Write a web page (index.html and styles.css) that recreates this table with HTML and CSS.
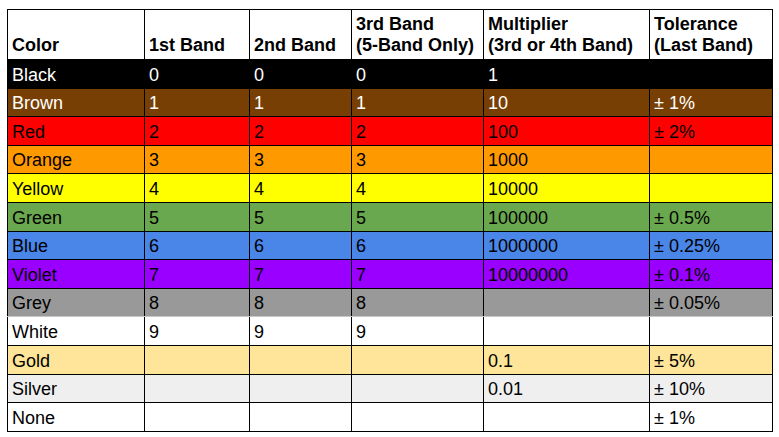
FILE: index.html
```html
<!DOCTYPE html>
<html>
<head>
<meta charset="utf-8">
<link rel="stylesheet" href="styles.css">
</head>
<body>
<div class="wrap">
<table class="bands">
  <colgroup>
    <col class="c1"><col class="c2"><col class="c3"><col class="c4"><col class="c5"><col class="c6">
  </colgroup>
  <thead>
    <tr class="head">
      <th>Color</th>
      <th>1st Band</th>
      <th>2nd Band</th>
      <th>3rd Band<br>(5-Band Only)</th>
      <th>Multiplier<br>(3rd or 4th Band)</th>
      <th>Tolerance<br>(Last Band)</th>
    </tr>
  </thead>
  <tbody>
    <tr class="black"><td>Black</td><td>0</td><td>0</td><td>0</td><td>1</td><td></td></tr>
    <tr class="brown"><td>Brown</td><td>1</td><td>1</td><td>1</td><td>10</td><td>± 1%</td></tr>
    <tr class="red"><td>Red</td><td>2</td><td>2</td><td>2</td><td>100</td><td>± 2%</td></tr>
    <tr class="orange"><td>Orange</td><td>3</td><td>3</td><td>3</td><td>1000</td><td></td></tr>
    <tr class="yellow"><td>Yellow</td><td>4</td><td>4</td><td>4</td><td>10000</td><td></td></tr>
    <tr class="green"><td>Green</td><td>5</td><td>5</td><td>5</td><td>100000</td><td>± 0.5%</td></tr>
    <tr class="blue"><td>Blue</td><td>6</td><td>6</td><td>6</td><td>1000000</td><td>± 0.25%</td></tr>
    <tr class="violet"><td>Violet</td><td>7</td><td>7</td><td>7</td><td>10000000</td><td>± 0.1%</td></tr>
    <tr class="grey"><td>Grey</td><td>8</td><td>8</td><td>8</td><td></td><td>± 0.05%</td></tr>
    <tr class="white"><td>White</td><td>9</td><td>9</td><td>9</td><td></td><td></td></tr>
    <tr class="gold"><td>Gold</td><td></td><td></td><td></td><td>0.1</td><td>± 5%</td></tr>
    <tr class="silver"><td>Silver</td><td></td><td></td><td></td><td>0.01</td><td>± 10%</td></tr>
    <tr class="none"><td>None</td><td></td><td></td><td></td><td></td><td>± 1%</td></tr>
  </tbody>
</table>
</div>
</body>
</html>
```
FILE: styles.css
```css
html, body {
  margin: 0;
  padding: 0;
  background: #ffffff;
}
.wrap {
  padding: 9px 0 0 7px;
}
.bands {
  border-collapse: collapse;
  table-layout: fixed;
  width: 765px;
  font-family: "Liberation Sans", Arial, sans-serif;
  font-size: 18px;
  color: #000000;
}
.c1 { width: 137px; }
.c2 { width: 105px; }
.c3 { width: 102px; }
.c4 { width: 132px; }
.c5 { width: 166px; }
.c6 { width: 123px; }
.bands th,
.bands td {
  border: 1px solid #000000;
  padding: 0 2px 3px 4px;
  text-align: left;
  vertical-align: bottom;
  line-height: 20px;
  white-space: nowrap;
  overflow: hidden;
}
.bands th {
  font-weight: bold;
  line-height: 21px;
  padding-bottom: 3px;
}
.head {
  height: 50px;
}
.bands tbody tr {
  height: 28.6px;
}
.black { background: #000000; color: #ffffff; }
.brown { background: #783f04; color: #ffffff; }
.red { background: #ff0000; }
.orange { background: #ff9900; }
.yellow { background: #ffff00; }
.green { background: #6aa84f; }
.blue { background: #4a86e8; }
.violet { background: #9900ff; }
.grey { background: #999999; }
.grey td { border-bottom-color: #c8c8c8; }
.white { background: #ffffff; }
.gold { background: #ffe599; }
.silver { background: #efefef; }
.none { background: #ffffff; }
```
